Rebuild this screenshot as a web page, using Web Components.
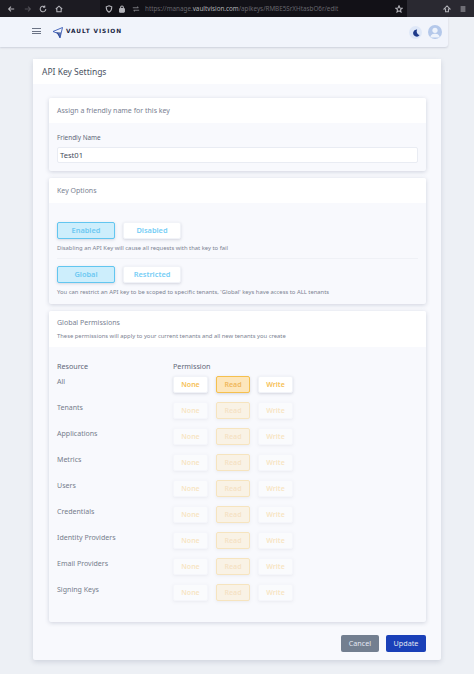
<!DOCTYPE html>
<html>
<head>
<meta charset="utf-8">
<style>
  html, body { margin: 0; height: 674px; overflow: hidden; background: #edf0f5; font-family: "Noto Sans", sans-serif; }
</style>
</head>
<body>
<browser-bar url-host="vaultvision.com" url-path="/apikeys/RMBE5SrXHtasbO6r/edit"></browser-bar>
<app-header></app-header>
<settings-page title="API Key Settings">
  <sub-card heading="Assign a friendly name for this key">
    <friendly-field label="Friendly Name" value="Test01"></friendly-field>
  </sub-card>
  <sub-card heading="Key Options" tight>
    <option-group first left="Enabled" right="Disabled" help="Disabling an API Key will cause all requests with that key to fail"></option-group>
    <option-group left="Global" right="Restricted" help="You can restrict an API key to be scoped to specific tenants, 'Global' keys have access to ALL tenants"></option-group>
  </sub-card>
  <sub-card heading="Global Permissions" sub="These permissions will apply to your current tenants and all new tenants you create" perms>
    <perm-table>
      <perm-row name="All" active></perm-row>
      <perm-row name="Tenants"></perm-row>
      <perm-row name="Applications"></perm-row>
      <perm-row name="Metrics"></perm-row>
      <perm-row name="Users"></perm-row>
      <perm-row name="Credentials"></perm-row>
      <perm-row name="Identity Providers"></perm-row>
      <perm-row name="Email Providers"></perm-row>
      <perm-row name="Signing Keys"></perm-row>
    </perm-table>
  </sub-card>
</settings-page>

<script>
(() => {
  class BrowserBar extends HTMLElement {
    connectedCallback() {
      const root = this.attachShadow({ mode: 'open' });
      root.innerHTML = `
        <style>
          :host { display:flex; height:17px; background:#1c1b22; color:#b4b4ba; }
          svg { display:block; width:8px; height:8px; flex:none; fill:none; stroke:currentColor; stroke-width:1.3; }
          .nav { display:flex; align-items:center; gap:7px; padding-left:7px; width:100px; box-sizing:border-box; }
          .nav .off { opacity:.35; margin:0 0 0 2px; }
          .url { width:307px; background:#121117; display:flex; align-items:center; gap:4px; padding-left:2px; box-sizing:border-box; }
          .url svg { margin-left:1px; }
          .text { font:6.300px/17px "Noto Sans",sans-serif; color:#66656c; white-space:nowrap; flex:1; overflow:hidden; margin-left:1px; }
          .text b { color:#b0b0b6; font-weight:400; }
          .star { margin-right:4px; }
          .right { flex:1; background:#2a2931; display:flex; align-items:center; justify-content:flex-end; gap:8px; padding-right:7px; }
        </style>
        <div class="nav">
          <svg viewBox="0 0 10 10"><path d="M9 5H2M5 2 2 5l3 3"/></svg>
          <svg class="off" viewBox="0 0 10 10"><path d="M1 5h7M5 2l3 3-3 3"/></svg>
          <svg viewBox="0 0 10 10"><path d="M8.500 5A3.500 3.500 0 1 1 7 2.100M7.200 .6v2.200H5"/></svg>
          <svg style="margin-left:1px" viewBox="0 0 10 10"><path d="M1 5 5 1.500 9 5M2.300 4.500V8.500H7.700V4.500"/></svg>
        </div>
        <div class="url">
          <svg style="margin-left:3px" viewBox="0 0 10 10"><path d="M5 1 8.500 2.200C8.500 6 7 8 5 9 3 8 1.500 6 1.500 2.200Z"/></svg>
          <svg viewBox="0 0 10 10"><rect x="2" y="4.500" width="6" height="4.500" rx=".8" fill="currentColor"/><path d="M3.300 4.500V3A1.700 1.700 0 0 1 6.700 3V4.500"/></svg>
          <svg style="opacity:.6;margin-left:2px" viewBox="0 0 10 10"><path d="M1 3.500h7M6.500 2l1.500 1.500M9 6.500H2M3.500 8 2 6.500"/></svg>
          <div class="text">https://manage.<b>${this.getAttribute('url-host')}</b>${this.getAttribute('url-path')}</div>
          <svg class="star" viewBox="0 0 10 10"><path d="M5 1 6.200 3.700 9 4 6.900 5.900 7.500 8.800 5 7.300 2.500 8.800 3.100 5.900 1 4 3.800 3.700Z"/></svg>
        </div>
        <div class="right">
          <svg viewBox="0 0 10 10"><path d="M5 1.200 8.800 5H6.800V8.500H3.200V5H1.200Z"/></svg>
          <svg viewBox="0 0 10 10"><path d="M2 2.500h6M2 5h6M2 7.500h6"/></svg>
        </div>`;
    }
  }

  class AppHeader extends HTMLElement {
    connectedCallback() {
      const root = this.attachShadow({ mode: 'open' });
      root.innerHTML = `
        <style>
          :host { display:flex; align-items:center; height:30px; width:448px; padding:0 6px 0 32px; box-sizing:border-box; background:#f1f4fb; box-shadow:0 1px 2px rgba(90,100,130,.22); border-radius:0 0 3px 0; }
          .burger { width:9px; height:6px; display:flex; flex-direction:column; justify-content:space-between; margin-bottom:2px; }
          .burger i { display:block; height:1px; background:#6b7385; }
          .logo { display:flex; align-items:center; margin-left:12px; }
          .word { font:700 5.800px/1 "DejaVu Sans",sans-serif; color:#16223f; letter-spacing:.95px; margin-left:1px; white-space:nowrap; }
          .tools { margin-left:auto; display:flex; align-items:center; gap:6px; }
          .moon { width:13px; height:13px; border-radius:50%; background:#dfe8f8; display:flex; align-items:center; justify-content:center; margin-top:1px; }
          .avatar { width:14px; height:14px; border-radius:50%; background:#b4c8ea; overflow:hidden; }
          svg { display:block; }
        </style>
        <div class="burger"><i></i><i></i><i></i></div>
        <div class="logo">
          <svg width="12" height="13" viewBox="0 0 12 13">
            <path d="M0 5.500 9.500 1.500 7 12 5 7.500Z" fill="none" stroke="#3658b5" stroke-width=".9"/>
            <path d="M3 6 7 12 8 6.500" fill="#1e3a8a" opacity=".7"/>
          </svg>
          <span class="word">VAULT VISION</span>
        </div>
        <div class="tools">
          <div class="moon"><svg width="8" height="8" viewBox="0 0 9 9"><path d="M5.800 .6A4 4 0 1 0 8.600 6.800 4.300 4.300 0 0 1 5.800 .6Z" fill="#1e3a8a"/></svg></div>
          <div class="avatar"><svg width="14" height="14" viewBox="0 0 14 14"><circle cx="7" cy="5.300" r="2.600" fill="#eef3fb"/><path d="M2.300 12.500C2.800 9.300 4.800 8.700 7 8.700S11.200 9.300 11.700 12.500Z" fill="#eef3fb"/></svg></div>
        </div>`;
    }
  }

  class SettingsPage extends HTMLElement {
    connectedCallback() {
      const root = this.attachShadow({ mode: 'open' });
      root.innerHTML = `
        <style>
          :host { display:block; width:408px; height:601px; margin:12px 0 0 33px; background:#f8f9fd; box-shadow:0 2px 5px rgba(90,100,130,.2); border-radius:2px; }
          .head { height:25px; background:#fff; padding-left:9px; font:400 8.500px/25px "Noto Sans",sans-serif; color:#4a5262; }
          .body { padding:14px 15px 0 16px; display:flex; flex-direction:column; gap:7px; }
          .foot { display:flex; justify-content:flex-end; gap:7px; padding:13px 15px 0 0; }
          button { height:17px; border:0; border-radius:2px; color:#e3e8f2; font:400 7.200px/17px "Noto Sans",sans-serif; padding:0; }
          .cancel { width:38px; background:#737f90; }
          .update { width:40px; background:#1a40b8; }
        </style>
        <div class="head">${this.getAttribute('title')}</div>
        <div class="body"><slot></slot></div>
        <div class="foot"><button class="cancel">Cancel</button><button class="update">Update</button></div>`;
    }
  }

  class SubCard extends HTMLElement {
    connectedCallback() {
      const root = this.attachShadow({ mode: 'open' });
      const sub = this.getAttribute('sub');
      root.innerHTML = `
        <style>
          :host { display:block; background:#f8f9fd; box-shadow:0 1px 4px rgba(80,90,120,.24); border-radius:2px; }
          .top { background:#fff; padding:0 8px; height:25px; box-sizing:border-box; border-radius:2px 2px 0 0; }
          :host([perms]) .top { height:36px; padding-top:5px; }
          h4 { margin:0; font:400 7px/25px "Noto Sans",sans-serif; color:#7a8192; }
          :host([perms]) h4 { line-height:14px; }
          p { margin:1px 0 0; font:400 5.850px/10px "Noto Sans",sans-serif; color:#7c8392; white-space:nowrap; }
          .inner { padding:8px 8px 8px; }
          :host([tight]) .inner { padding:19px 8px 7px; }
          :host([perms]) .inner { padding:13px 8px 21px; }
        </style>
        <div class="top"><h4>${this.getAttribute('heading')}</h4>${sub ? `<p>${sub}</p>` : ''}</div>
        <div class="inner"><slot></slot></div>`;
    }
  }

  class FriendlyField extends HTMLElement {
    connectedCallback() {
      const root = this.attachShadow({ mode: 'open' });
      root.innerHTML = `
        <style>
          :host { display:block; }
          label { display:block; font:400 6.400px/14px "Noto Sans",sans-serif; color:#5f6778; margin-bottom:2px; }
          .input { height:16px; box-sizing:border-box; background:#fff; border:1px solid #e9ecf3; border-radius:2px; padding-left:2px; font:400 7.600px/14px "Noto Sans",sans-serif; color:#454c5a; }
        </style>
        <label>${this.getAttribute('label')}</label>
        <div class="input" role="textbox">${this.getAttribute('value')}</div>`;
    }
  }

  class ToggleBtn extends HTMLElement {
    connectedCallback() {
      const root = this.attachShadow({ mode: 'open' });
      const w = this.getAttribute('w') || 58;
      root.innerHTML = `
        <style>
          :host { display:block; }
          div { width:${w}px; height:17px; box-sizing:border-box; border-radius:2px; text-align:center; font:600 7.400px/15px "Noto Sans",sans-serif; background:#fff; border:1px solid #f1f3f8; box-shadow:0 1px 3px rgba(80,90,120,.22); }
          :host([tone=blue]) div { color:#74cdf6; }
          :host([tone=blue][on]) div { background:#cdeefc; border-color:#62c6f0; color:#6cc8f2; }
          :host([tone=amber]) div { font-size:7px; color:#f6c054; }
          :host([tone=amber][on]) div { background:#fde6bb; border-color:#f5c04e; color:#f0b75a; }
        </style>
        <div><slot></slot></div>`;
    }
  }

  class OptionGroup extends HTMLElement {
    connectedCallback() {
      const root = this.attachShadow({ mode: 'open' });
      root.innerHTML = `
        <style>
          :host { display:block; padding-top:7px; border-top:1px solid #eff1f6; }
          :host([first]) { padding-top:0; border-top:0; padding-bottom:5px; }
          .btns { display:flex; gap:8px; }
          p { margin:4px 0 0; font:400 5.850px/10px "Noto Sans",sans-serif; color:#7c8392; white-space:nowrap; }
        </style>
        <div class="btns">
          <toggle-btn tone="blue" on>${this.getAttribute('left')}</toggle-btn>
          <toggle-btn tone="blue">${this.getAttribute('right')}</toggle-btn>
        </div>
        <p>${this.getAttribute('help')}</p>`;
    }
  }

  class PermTable extends HTMLElement {
    connectedCallback() {
      const root = this.attachShadow({ mode: 'open' });
      root.innerHTML = `
        <style>
          :host { display:block; }
          .cols { display:grid; grid-template-columns:116px 1fr; font:400 7.200px/12px "Noto Sans",sans-serif; color:#5f6778; height:12px; margin-bottom:4px; }
          .rows { display:flex; flex-direction:column; gap:9px; }
        </style>
        <div class="cols"><span>Resource</span><span>Permission</span></div>
        <div class="rows"><slot></slot></div>`;
    }
  }

  class PermRow extends HTMLElement {
    connectedCallback() {
      const root = this.attachShadow({ mode: 'open' });
      root.innerHTML = `
        <style>
          :host { display:grid; grid-template-columns:116px 1fr; height:17px; }
          .name { font:400 7.050px/10px "Noto Sans",sans-serif; color:#767d8c; }
          .btns { display:flex; }
          :host(:not([active])) .btns { opacity:.35; }
          toggle-btn + toggle-btn { margin-left:8px; }
        </style>
        <div class="name">${this.getAttribute('name')}</div>
        <div class="btns">
          <toggle-btn tone="amber" w="35">None</toggle-btn>
          <toggle-btn tone="amber" w="34" on>Read</toggle-btn>
          <toggle-btn tone="amber" w="35">Write</toggle-btn>
        </div>`;
    }
  }

  customElements.define('browser-bar', BrowserBar);
  customElements.define('app-header', AppHeader);
  customElements.define('settings-page', SettingsPage);
  customElements.define('sub-card', SubCard);
  customElements.define('friendly-field', FriendlyField);
  customElements.define('toggle-btn', ToggleBtn);
  customElements.define('option-group', OptionGroup);
  customElements.define('perm-table', PermTable);
  customElements.define('perm-row', PermRow);
})();
</script>
</body>
</html>
